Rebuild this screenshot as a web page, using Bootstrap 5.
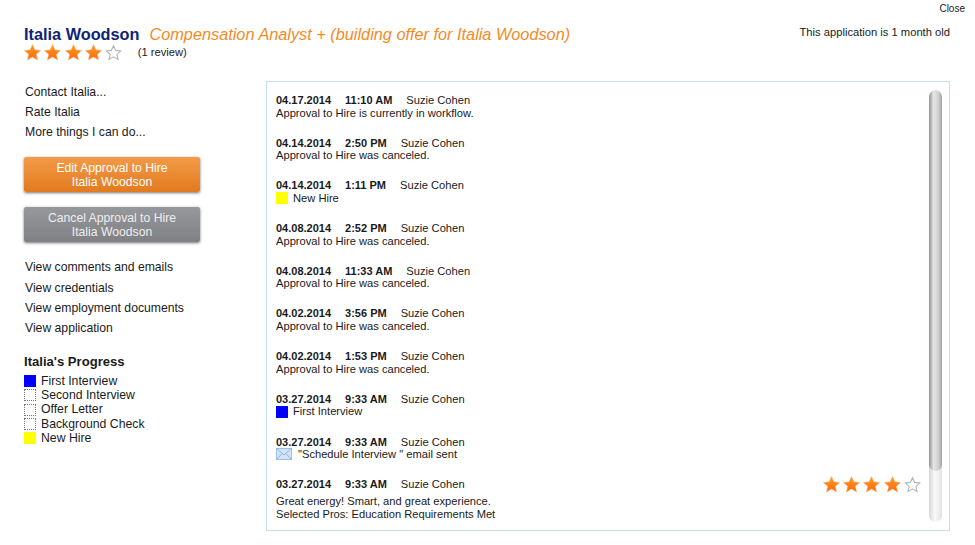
<!DOCTYPE html>
<html lang="en">
<head>
    <meta charset="UTF-8">
    <meta name="viewport" content="width=device-width, initial-scale=1.0">
    <title>Italia Woodson</title>
    <link href="https://cdn.jsdelivr.net/npm/bootstrap@5.3.0/dist/css/bootstrap.min.css" rel="stylesheet">
    <style>
        html, body { height: 100%; overflow: hidden; }
        body { font-family: "Liberation Sans", Arial, sans-serif; color: #1a1a1a; background: #fff; }
        .app-page { width: 975px; height: 545px; padding: 2px 25px 0 24px; position: relative; }
        .close-link { font-size: 10px; line-height: 12px; color: #222; text-decoration: none; text-align: right; margin-right: -15px; padding-top: 1px; }
        .head-row { margin-top: 8px; height: 58px; }
        .cand-name { font-size: 16.3px; line-height: 22px; font-weight: 700; color: #0e2277; margin: 0 10px 0 0; }
        .job-name { font-size: 16.3px; line-height: 22px; font-style: italic; color: #f58a1f; }
        .app-age { font-size: 11.2px; line-height: 16px; margin-top: 1px; }
        .review-row { margin-top: -3px; height: 20px; }
        .review-txt { font-size: 11.2px; margin-left: 15.5px; margin-top: 1px; }
        .star-set { display: flex; gap: 3.3px; }
        .star-ico { width: 17px; height: 17px; display: block; }
        .body-row { height: 450px; }
        .side-col { width: 242px; flex: none; padding: .5px 0 0 1px; }
        .side-links a { display: block; font-size: 12.2px; line-height: 20.4px; color: #1a1a1a; text-decoration: none; }
        .act-btn { display: block; width: 176px; height: 35px; margin-left: -1px; padding: 3px 4px; font-size: 12.2px; line-height: 14px; color: #fff; border: 0; border-radius: 2px; box-shadow: 0 1px 3px rgba(0,0,0,.55); }
        .act-orange { margin-top: 14.5px; background: linear-gradient(#f29a48, #e37a1f); }
        .act-grey { margin-top: 15px; background: linear-gradient(#97989c, #7f8084); color: #eee; }
        .view-links { margin-top: 15px; }
        .prog-title { font-size: 13.1px; line-height: 16px; font-weight: 700; margin: 15px 0 4px -1px; }
        .prog-item { display: flex; align-items: center; font-size: 12.25px; line-height: 14.3px; margin-left: -1px; }
        .sq { width: 12px; height: 12px; margin-right: 5px; flex: none; display: block; }
        .sq-blue { background: #0000ff; }
        .sq-yellow { background: #ffff00; }
        .sq-empty { border: 1px dotted #777; }
        .log-panel { width: 684px; height: 450px; border: 1px solid #c7dcf2; padding: 8px 7px 8px 9px; }
        .log-list { flex: 1 1 auto; min-width: 0; padding-top: 4px; }
        .log-item { font-size: 11.15px; line-height: 12.5px; margin-bottom: 17.7px; }
        .log-item b { margin-right: 14px; font-weight: 700; font-size: 11px; }
        .log-sub { display: flex; align-items: center; }
        .log-sub .sq { margin-right: 5px; }
        .mail-ico { width: 16px; height: 12px; margin-right: 6px; display: block; }
        .log-top { display: flex; justify-content: space-between; }
        .log-gap { margin-top: 2px; }
        .log-stars { margin-top: -2px; margin-right: 8px; }
        .scroll-track { width: 13px; flex: none; margin-left: 0; background: linear-gradient(90deg, #d6d6d6, #fafafa 45%, #e2e2e2); border-radius: 7px; height: 432px; overflow: hidden; }
        .scroll-thumb { height: 381px; border-radius: 7px; background: linear-gradient(90deg, #8f8f8f, #e6e6e6 35%, #cdcdcd 75%, #a0a0a0); }
    </style>
</head>
<body>
    <svg width="0" height="0" class="position-absolute">
        <defs>
            <linearGradient id="starFill" x1="0" y1="0" x2="0" y2="1">
                <stop offset="0" stop-color="#ff9a1e"/>
                <stop offset="1" stop-color="#fb6a0c"/>
            </linearGradient>
            <symbol id="starOn" viewBox="0 0 20 20">
                <path d="M10 .6l2.8 6.3 6.8.7-5.1 4.5 1.5 6.7L10 15.3l-6 3.5 1.5-6.7L.4 7.6l6.8-.7z" fill="url(#starFill)" stroke="#fbb98a" stroke-width=".7"/>
            </symbol>
            <symbol id="starOff" viewBox="0 0 20 20">
                <path d="M10 2l2.5 5.5 6 .7-4.5 4 1.3 5.9L10 15.1l-5.3 3 1.3-5.9-4.5-4 6-.7z" fill="#fff" stroke="#b5b5b5" stroke-width="1.3"/>
            </symbol>
        </defs>
    </svg>

    <div class="app-page">
        <div class="close-link">Close</div>

        <div class="head-row d-flex justify-content-between">
            <div>
                <div class="d-flex align-items-baseline">
                    <h1 class="cand-name">Italia Woodson</h1>
                    <span class="job-name">Compensation Analyst + (building offer for Italia Woodson)</span>
                </div>
                <div class="review-row d-flex align-items-center">
                    <div class="star-set">
                        <svg class="star-ico"><use href="#starOn"/></svg>
                        <svg class="star-ico"><use href="#starOn"/></svg>
                        <svg class="star-ico"><use href="#starOn"/></svg>
                        <svg class="star-ico"><use href="#starOn"/></svg>
                        <svg class="star-ico"><use href="#starOff"/></svg>
                    </div>
                    <span class="review-txt">(1 review)</span>
                </div>
            </div>
            <div class="app-age">This application is 1 month old</div>
        </div>

        <div class="body-row d-flex">
            <div class="side-col">
                <div class="side-links">
                    <a href="#">Contact Italia...</a>
                    <a href="#">Rate Italia</a>
                    <a href="#">More things I can do...</a>
                </div>
                <button type="button" class="act-btn act-orange">Edit Approval to Hire<br>Italia Woodson</button>
                <button type="button" class="act-btn act-grey">Cancel Approval to Hire<br>Italia Woodson</button>
                <div class="side-links view-links">
                    <a href="#">View comments and emails</a>
                    <a href="#">View credentials</a>
                    <a href="#">View employment documents</a>
                    <a href="#">View application</a>
                </div>
                <div class="prog-title">Italia's Progress</div>
                <div class="prog-item"><span class="sq sq-blue"></span>First Interview</div>
                <div class="prog-item"><span class="sq sq-empty"></span>Second Interview</div>
                <div class="prog-item"><span class="sq sq-empty"></span>Offer Letter</div>
                <div class="prog-item"><span class="sq sq-empty"></span>Background Check</div>
                <div class="prog-item"><span class="sq sq-yellow"></span>New Hire</div>
            </div>

            <div class="log-panel d-flex">
                <div class="log-list">
                    <div class="log-item"><div><b>04.17.2014</b><b>11:10 AM</b>Suzie Cohen</div><div>Approval to Hire is currently in workflow.</div></div>
                    <div class="log-item"><div><b>04.14.2014</b><b>2:50 PM</b>Suzie Cohen</div><div>Approval to Hire was canceled.</div></div>
                    <div class="log-item"><div><b>04.14.2014</b><b>1:11 PM</b>Suzie Cohen</div><div class="log-sub"><span class="sq sq-yellow"></span>New Hire</div></div>
                    <div class="log-item"><div><b>04.08.2014</b><b>2:52 PM</b>Suzie Cohen</div><div>Approval to Hire was canceled.</div></div>
                    <div class="log-item"><div><b>04.08.2014</b><b>11:33 AM</b>Suzie Cohen</div><div>Approval to Hire was canceled.</div></div>
                    <div class="log-item"><div><b>04.02.2014</b><b>3:56 PM</b>Suzie Cohen</div><div>Approval to Hire was canceled.</div></div>
                    <div class="log-item"><div><b>04.02.2014</b><b>1:53 PM</b>Suzie Cohen</div><div>Approval to Hire was canceled.</div></div>
                    <div class="log-item"><div><b>03.27.2014</b><b>9:33 AM</b>Suzie Cohen</div><div class="log-sub"><span class="sq sq-blue"></span>First Interview</div></div>
                    <div class="log-item"><div><b>03.27.2014</b><b>9:33 AM</b>Suzie Cohen</div><div class="log-sub">
                        <svg class="mail-ico" viewBox="0 0 16 12"><rect x=".5" y=".5" width="15" height="11" fill="#d3e4f7" stroke="#9dbfe3"/><path d="M.5.5L8 7l7.5-6.5M.5 11.5L6 5.5M15.5 11.5L10 5.5" fill="none" stroke="#8fb4dc"/></svg>"Schedule Interview " email sent</div></div>
                    <div class="log-item">
                        <div class="log-top">
                            <div><b>03.27.2014</b><b>9:33 AM</b>Suzie Cohen</div>
                            <div class="star-set log-stars">
                                <svg class="star-ico"><use href="#starOn"/></svg>
                                <svg class="star-ico"><use href="#starOn"/></svg>
                                <svg class="star-ico"><use href="#starOn"/></svg>
                                <svg class="star-ico"><use href="#starOn"/></svg>
                                <svg class="star-ico"><use href="#starOff"/></svg>
                            </div>
                        </div>
                        <div class="log-gap">Great energy! Smart, and great experience.<br>Selected Pros: Education Requirements Met</div>
                    </div>
                </div>
                <div class="scroll-track"><div class="scroll-thumb"></div></div>
            </div>
        </div>
    </div>
    <script src="https://cdn.jsdelivr.net/npm/bootstrap@5.3.0/dist/js/bootstrap.bundle.min.js"></script>
</body>
</html>
